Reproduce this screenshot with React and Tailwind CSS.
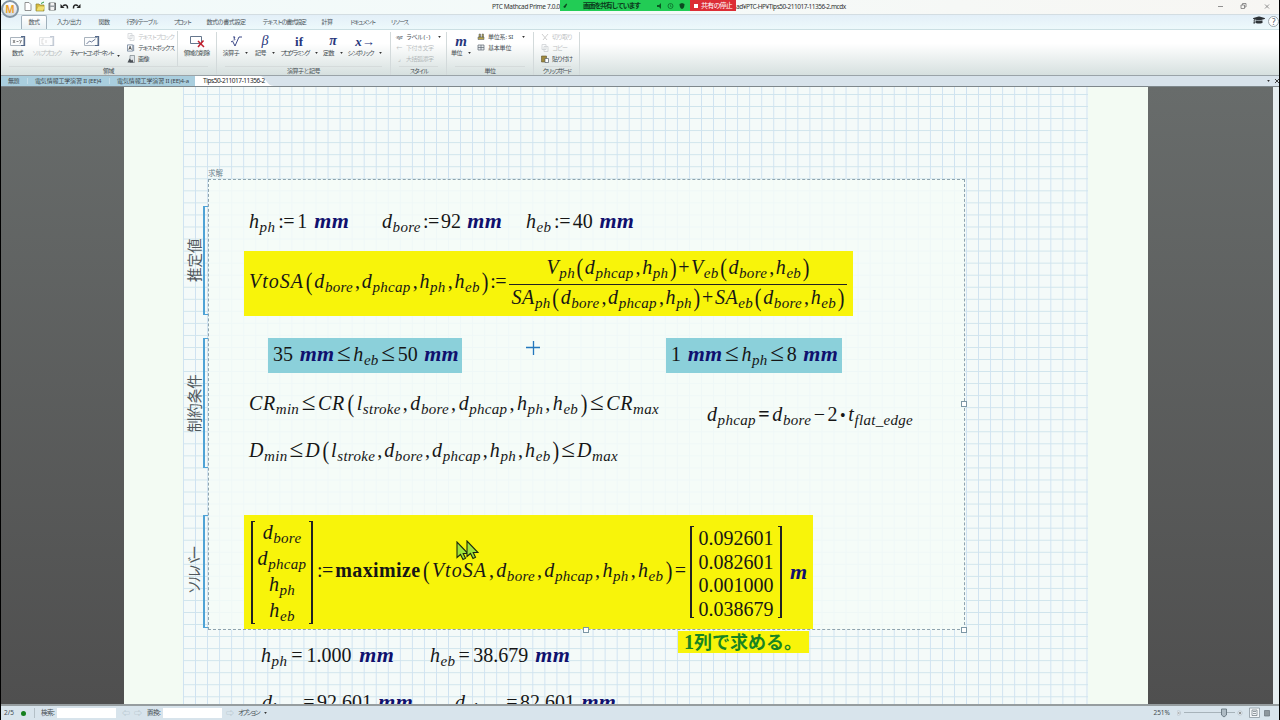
import clsx from "clsx";
import { FaGraduationCap } from "react-icons/fa";

const TABS = [
  { label: "入力/出力", cls: "w-[44px]" },
  { label: "関数", cls: "w-[26px]" },
  { label: "行列/テーブル", cls: "w-[50px] tracking-[-1px]" },
  { label: "プロット", cls: "w-[30px] tracking-[-1.8px]" },
  { label: "数式の書式設定", cls: "w-[58px]" },
  { label: "テキストの書式設定", cls: "w-[58px] tracking-[-1.2px]" },
  { label: "計算", cls: "w-[28px]" },
  { label: "ドキュメント", cls: "w-[42px] tracking-[-1.8px]" },
  { label: "リソース", cls: "w-[32px] tracking-[-1.7px]" },
];

// ---------- ribbon ----------

function Caret({ className }) {
  return (
    <svg viewBox="0 0 4 3" className={clsx("h-[2px] w-[3px] shrink-0", className)}>
      <path d="M0 0h4L2 3z" fill="#333" />
    </svg>
  );
}

function Big({ icon, label, cls, off, caret }) {
  return (
    <div className={clsx("flex shrink-0 flex-col items-center", cls, off && "opacity-35")}>
      <div className="flex h-[14px] items-center justify-center">{icon}</div>
      <div className="mt-px flex h-[8px] items-center gap-[6px] whitespace-nowrap">
        <span>{label}</span>
        {caret && <Caret />}
      </div>
    </div>
  );
}

function Small({ icon, label, off, caret }) {
  return (
    <div className={clsx("flex h-[11px] items-center gap-[3px] whitespace-nowrap", off && "opacity-35")}>
      <span className="flex w-[8px] shrink-0 justify-center">{icon}</span>
      <span>{label}</span>
      {caret && <Caret className="ml-auto" />}
    </div>
  );
}

function Group({ title, cls, children }) {
  return (
    <div className={clsx("flex shrink-0 flex-col border-r border-[#d3dadb]", cls)}>
      <div className="flex h-[34px] pt-[2px]">{children}</div>
      <div className="mx-2 border-t border-[#d5dbdb] text-center leading-[8px]">{title}</div>
    </div>
  );
}

function BoxIcon({ children }) {
  return (
    <svg viewBox="0 0 16 10" className="h-[10px] w-[16px]">
      <path d="M.5 1.5h13v8H.5z" fill="#fbfcfd" stroke="#a9b3bd" />
      <path d="M11 .6h3.6v9H11" fill="none" stroke="#53688a" strokeWidth="1.1" />
      {children}
    </svg>
  );
}

function Glyph({ children, className }) {
  return (
    <span className={clsx("font-['Liberation_Serif',serif] leading-none tracking-normal text-[#27367c]", className)}>
      {children}
    </span>
  );
}

function PageIcon({ color = "#7d8790" }) {
  return (
    <svg viewBox="0 0 8 8" className="h-[8px] w-[8px]">
      <path d="M1 .5h4v5H1zM3 2.5h4v5H3z" fill="#f8fafb" stroke={color} strokeWidth=".8" />
    </svg>
  );
}

function TitleBar() {
  return (
    <div className="flex h-[14px] shrink-0 items-start bg-gradient-to-r from-[#f1fafa] via-[#f5faf9] to-[#f7f6f3]">
      <svg viewBox="0 0 62 14" className="ml-[21px] mt-px h-[14px] w-[62px]">
        <path d="M3 1.500h4l2 2v6H3z" fill="#fff" stroke="#777" strokeWidth=".8" />
        <path d="M14 3h3l1 1h4v6h-8z" fill="#d5b83c" stroke="#8b8434" strokeWidth=".7" />
        <path d="M14.500 9.500l2-4h6.500l-2 4z" fill="#f0df6e" />
        <path d="M19 2.500l3-1.500" stroke="#2f9b3d" />
        <path d="M27 2h6.500v7H27z" fill="#9aa0a4" stroke="#555" strokeWidth=".8" />
        <path d="M28.500 2h3.500v2.500h-3.500zM28.500 6h3.500v3h-3.500z" fill="#f2f2f2" />
        <path d="M41 5c2-2 5-1 4.500 2.500" fill="none" stroke="#222" strokeWidth="1.500" />
        <path d="M38.500 3v4h4z" fill="#222" />
        <path d="M56 5c-2-2-5-1-4.500 2.500" fill="none" stroke="#222" strokeWidth="1.500" />
        <path d="M58.500 3v4h-4z" fill="#222" />
      </svg>
      <div className="ml-[408px] w-[68px] whitespace-nowrap pt-[2px] text-[6.500px] leading-[9px] tracking-[-0.350px] text-[#333]">
        PTC Mathcad Prime 7.0.0
      </div>
      <div className="flex h-[11px] w-[130px] items-center bg-[#22cc55] text-[7px] font-bold leading-none text-[#0b3a1c]">
        <svg viewBox="0 0 6 6" className="ml-[3px] h-[5px] w-[5px]">
          <path d="M1 4l3-3.500 1 1-2 4-2 .5z" fill="#0b4a20" />
        </svg>
        <span className="ml-[15px] w-[58px] whitespace-nowrap tracking-[-1.300px]">画面を共有しています</span>
        <svg viewBox="0 0 30 8" className="ml-[15px] h-[8px] w-[30px]">
          <path d="M1 3h2l2-2v6L3 5H1z" fill="#0b5a24" />
          <circle cx="14.500" cy="4" r="2.500" fill="none" stroke="#0b6a2a" strokeWidth=".8" />
          <path d="M14.500 2.500v2h1" fill="none" stroke="#0b6a2a" strokeWidth=".6" />
          <path d="M23.500 2l2.500-1 2.500 1c0 3-1 4.500-2.500 5-1.500-.5-2.500-2-2.500-5z" fill="#0b4a20" />
        </svg>
      </div>
      <div className="flex h-[11px] w-[46px] items-center gap-[3px] bg-[#dc2d35] pl-[4px] text-[7px] leading-none text-white">
        <span className="h-[4px] w-[4px] bg-white" />
        <span className="whitespace-nowrap tracking-[-0.800px]">共有の停止</span>
      </div>
      <div className="whitespace-nowrap pt-[2px] text-[6.500px] leading-[9px] tracking-[-0.470px] text-[#333]">
        ad¥PTC-HP¥Tips50-211017-11356-2.mcdx
      </div>
      <svg viewBox="0 0 54 8" className="ml-auto mr-[8px] mt-[2px] h-[8px] w-[54px]" fill="none" stroke="#777" strokeWidth=".8">
        <path d="M1 4.500h5M24 3h3.500v3.500H24zM25.500 3V1.500H29V5h-1.500M48 2.500l4 4M52 2.500l-4 4" />
      </svg>
    </div>
  );
}

function RibbonTabs() {
  return (
    <div className="flex h-[16px] shrink-0 items-end border-b border-t border-b-[#cbdfe3] border-t-[#d3dde2] bg-gradient-to-b from-[#e3eff8] to-[#edf9fb] pl-[20px] text-[6px] tracking-[-0.400px] text-[#4c565c]">
      <div className="flex h-[14px] w-[26px] items-center justify-center rounded-t-[2px] border border-b-0 border-[#9fb0bb] bg-gradient-to-b from-white to-[#e8f1f4]">
        数式
      </div>
      {TABS.map((t) => (
        <div key={t.label} className={clsx("flex h-[14px] items-center justify-center whitespace-nowrap", t.cls)}>
          {t.label}
        </div>
      ))}
      <FaGraduationCap className="mb-[3px] ml-auto text-[12px] text-[#2d3236]" />
      <span className="mb-[2px] ml-[3px] flex h-[11px] w-[11px] items-center justify-center rounded-full border border-[#9aa5aa] bg-white text-[8px] leading-none">
        ?
      </span>
    </div>
  );
}

function Ribbon() {
  return (
    <div className="flex h-[46px] shrink-0 border-b border-[#9aa3a8] bg-gradient-to-b from-white from-30% to-[#d6e0df] pt-[2px] text-[6px] leading-[8px] tracking-[-0.500px] text-[#434b50]">
      <Group title="領域" cls="w-[216px]">
        <Big
          cls="w-[33px]"
          label="数式"
          icon={
            <BoxIcon>
              <path d="M3 4l2 3M5 4L3 7M6.500 5.500h2M9.500 4l1 1.500M11.500 4l-1.500 3.500" stroke="#555" strokeWidth=".7" fill="none" />
            </BoxIcon>
          }
        />
        <Big
          cls="w-[25px] tracking-[-1.900px]"
          label="ソルブブロック"
          off
          icon={
            <BoxIcon>
              <path d="M5 3H3v5h2M7 4v3" stroke="#777" strokeWidth=".7" fill="none" />
            </BoxIcon>
          }
        />
        <Big
          cls="w-[58px] pl-[7px] tracking-[-2.100px]"
          label="チャートコンポーネント"
          icon={
            <BoxIcon>
              <path d="M2.500 8l3-3 2 1 4-3" stroke="#4b5d80" strokeWidth=".8" fill="none" />
            </BoxIcon>
          }
        />
        <div className="flex w-[8px] items-end pb-[9px]">
          <Caret />
        </div>
        <div className="-mt-[3px] flex w-[53px] flex-col border-r border-[#d3dadb] pl-[2px] tracking-[-1.500px]">
          <Small icon={<PageIcon />} label="テキストブロック" off />
          <Small
            icon={
              <svg viewBox="0 0 9 8" className="h-[8px] w-[9px]">
                <path d="M.5.5h6v7h-6zM7.500.5v7" fill="none" stroke="#5b6f8c" strokeWidth=".8" />
                <path d="M2 6l1.500-4L5 6M2.500 4.500h2" fill="none" stroke="#333" strokeWidth=".8" />
              </svg>
            }
            label="テキストボックス"
          />
          <Small
            icon={
              <svg viewBox="0 0 8 8" className="h-[8px] w-[8px]">
                <path d="M3 .5h4.500v7H3z" fill="#dfe4e8" stroke="#69737b" strokeWidth=".6" />
                <path d="M.5 7.500l2-4 2 2 1-1 1 3z" fill="#4a4f55" />
              </svg>
            }
            label={<span className="tracking-[-0.500px]">画像</span>}
          />
        </div>
        <Big
          cls="w-[37px] tracking-[-0.900px]"
          label="領域の削除"
          icon={
            <svg viewBox="0 0 16 13" className="h-[13px] w-[16px]">
              <path d="M1.500 1.500h11v7h-11z" fill="#fff" stroke="#65768d" />
              <path d="M9 6l6 6M14.500 5.500L9 12" stroke="#c01f2d" strokeWidth="1.500" />
            </svg>
          }
        />
      </Group>
      <Group title="演算子と記号" cls="w-[174px]">
        <Big
          cls="w-[37px]"
          label="演算子"
          caret
          icon={
            <svg viewBox="0 0 12 11" className="h-[11px] w-[12px]" fill="none" stroke="#27367c" strokeWidth=".9">
              <path d="M1 6l1.500-1L5 10l4-9h3M3 1h2L4 2.500c1.500 0 1 2-.5 1.500" />
            </svg>
          }
        />
        <Big cls="w-[22px]" label="記号" caret icon={<Glyph className="text-[14px] italic">β</Glyph>} />
        <Big cls="w-[46px] tracking-[-1.900px]" label="プログラミング" caret icon={<Glyph className="text-[13px] font-bold">if</Glyph>} />
        <Big cls="w-[22px]" label="定数" caret icon={<Glyph className="text-[14px] font-bold italic">π</Glyph>} />
        <Big cls="w-[42px] tracking-[-1.700px]" label="シンボリック" caret icon={<Glyph className="text-[13px] font-bold italic">x→</Glyph>} />
      </Group>
      <Group title={<span className="tracking-[-1.500px]">スタイル</span>} cls="w-[56px]">
        <div className="-mt-[3px] flex w-[50px] flex-col pl-[4px] tracking-[-0.500px]">
          <Small icon={<span className="text-[5px]">·xyz</span>} label="ラベル ( - )" caret />
          <Small icon="←" label="下付き文字" off />
          <Small icon="⌟" label="大括弧添字" off />
        </div>
      </Group>
      <Group title="単位" cls="w-[87px]">
        <Big cls="w-[28px]" label="単位" caret icon={<Glyph className="text-[15px] font-bold italic">m</Glyph>} />
        <div className="-mt-[3px] flex w-[50px] flex-col pl-[2px] tracking-[-0.200px]">
          <Small
            icon={
              <svg viewBox="0 0 8 7" className="h-[7px] w-[8px]">
                <path d="M1 4h6v2.500H1zM2 1h1.500v3H2zM5 1h1.500v3H5z" fill="#b9a64c" stroke="#4d5560" strokeWidth=".5" />
              </svg>
            }
            label="単位系: SI"
            caret
          />
          <Small
            icon={
              <svg viewBox="0 0 8 7" className="h-[7px] w-[8px]">
                <path d="M1 1h6v5H1zM1 3.500h6M4 1v5" fill="#e6ebee" stroke="#5b6670" strokeWidth=".7" />
              </svg>
            }
            label="基本単位"
          />
        </div>
      </Group>
      <Group title={<span className="tracking-[-2px]">クリップボード</span>} cls="w-[46px] whitespace-nowrap">
        <div className="-mt-[3px] flex flex-col pl-[7px] tracking-[-1px]">
          <Small
            off
            icon={
              <svg viewBox="0 0 8 8" className="h-[8px] w-[8px]" fill="none" stroke="#777">
                <path d="M1 1l5 6M7 1L2 7" />
              </svg>
            }
            label="切り取り"
          />
          <Small off icon={<PageIcon />} label="コピー" />
          <Small
            icon={
              <svg viewBox="0 0 8 8" className="h-[8px] w-[8px]">
                <path d="M.5 1h5v6h-5z" fill="#a08a3d" stroke="#5f5631" strokeWidth=".6" />
                <path d="M4 3.500h3.500v4H4z" fill="#fff" stroke="#555e6a" strokeWidth=".7" />
              </svg>
            }
            label="貼り付け"
          />
        </div>
      </Group>
    </div>
  );
}

function SheetTabs() {
  return (
    <div className="flex h-[11px] shrink-0 items-center border-b border-[#7e878b] bg-[#d8e3eb] text-[6px] leading-none text-[#3d464c]">
      <div className="flex h-full items-center bg-[#a9cede]">
        <span className="w-[26px] pl-[7px] tracking-[-0.400px]">無題</span>
        <span className="w-[82px] whitespace-nowrap border-l border-[#c4dce7] pl-[7px] tracking-[-0.150px]">電気情報工学演習 II (EE)4</span>
        <span className="w-[86px] whitespace-nowrap border-l border-[#c4dce7] pl-[7px] tracking-[-0.120px]">電気情報工学演習 II (EE)4-a</span>
      </div>
      <svg viewBox="0 0 82 10" className="-mr-[82px] h-full w-[82px]" preserveAspectRatio="none">
        <path d="M0 0h65c6 0 6 10 14 10H0z" fill="#fff" />
      </svg>
      <div className="flex h-full w-[82px] items-center whitespace-nowrap pl-[8px] text-[6.500px] tracking-[-0.430px] text-[#222]">
        <span className="relative">Tips50-211017-11356-2</span>
      </div>
      <Caret className="ml-auto mr-[5px]" />
      <svg viewBox="0 0 4 4" className="h-[4px] w-[4px]" stroke="#444">
        <path d="M0 0l4 4M4 0L0 4" />
      </svg>
    </div>
  );
}

// ---------- math ----------

function V({ n, s, className }) {
  return (
    <span className={clsx("italic tracking-[0.600px]", className)}>
      {n}
      {s && <span className="align-[-4px] text-[15px] leading-none tracking-[0.300px]">{s}</span>}
    </span>
  );
}

function P({ children }) {
  return <span className="inline-block scale-y-[1.250] text-[20px] leading-none">{children}</span>;
}

function Mm({ u = "mm" }) {
  return <span className="pl-[4px] text-[22px] font-bold italic leading-none tracking-[0.200px] text-[#10106e]">{u}</span>;
}

// comma separated list of variables in tall parentheses
function Args({ list }) {
  return (
    <>
      <P>(</P>
      {list.map(([n, s], i) => (
        <span key={i}>
          <V n={n} s={s} />
          {i < list.length - 1 && <span className="pl-[2px]">,</span>}
        </span>
      ))}
      <P>)</P>
    </>
  );
}

function Row({ children, className }) {
  return (
    <div
      className={clsx(
        "flex items-baseline justify-between whitespace-nowrap font-['Liberation_Serif',serif] text-[20px] leading-[24px] text-[#161616]",
        className
      )}
    >
      {children}
    </div>
  );
}

function Def() {
  return <span className="tracking-[-0.500px]">:=</span>;
}

function Le() {
  return <span className="text-[25px] leading-none">≤</span>;
}

function Matrix({ children, className }) {
  return (
    <div className={clsx("flex", className)}>
      <div className="w-[4px] border-y border-l-2 border-[#222]" />
      <div className="flex flex-1 flex-col items-center">{children}</div>
      <div className="w-[4px] border-y border-r-2 border-[#222]" />
    </div>
  );
}

const bore = ["d", "bore"];
const cap = ["d", "phcap"];
const hph = ["h", "ph"];
const heb = ["h", "eb"];
const stroke = ["l", "stroke"];

function Section({ title, className }) {
  return (
    <div className={clsx("absolute left-[185px] flex w-[24px] items-center", className)}>
      <div className="flex w-[18px] shrink-0 items-center justify-center">
        <span className="-rotate-90 whitespace-nowrap text-[14.500px] leading-none text-[#50585c]">{title}</span>
      </div>
      <div className="h-full w-[5px] border-y border-l-2 border-[#4fa3d6]" />
    </div>
  );
}

function Handle({ className }) {
  return <div className={clsx("absolute h-[6px] w-[6px] border border-[#7d97a5] bg-white", className)} />;
}

function Pointer({ className }) {
  return (
    <svg viewBox="0 0 13 20" className={clsx("absolute h-[20px] w-[13px]", className)}>
      <path d="M1 1v15.500l3.500-3 2.500 5 2.500-1.200-2.300-4.800H12z" fill="#a0e43a" stroke="#1c2a10" strokeWidth="1.100" />
    </svg>
  );
}

function Worksheet() {
  return (
    <div className="relative flex flex-1 overflow-hidden bg-gradient-to-b from-[#686c6b] to-[#4f4f4f]">
      <div className="ml-[123px] flex w-[1024px] bg-[#f3fbf3] pl-[59px]">
        <div className="w-[905px] bg-[#f4faf9] bg-[linear-gradient(to_right,#cfe2f1_1px,transparent_1px),linear-gradient(to_bottom,#cfe4ec_1px,transparent_1px)] bg-[length:12.050px_12.050px] bg-[position:0_7px]" />
      </div>
      <div className="ml-auto w-[6px] bg-[#e6eef0]" />

      {/* the canvas the regions are placed on */}
      <div className="absolute inset-y-0 -left-px w-[1280px]">
        <div className="absolute left-[208px] top-[92px] h-[451px] w-[757px] border border-dashed border-[#8ea3ae] bg-[#f4fbf8]/85" />
        <span className="absolute left-[208px] top-[83px] text-[7.500px] leading-none text-[#6c8490]">求解</span>
        <Section title="推定値" className="top-[119px] h-[109px]" />
        <Section title="制約条件" className="top-[251px] h-[130px]" />
        <Section title={<span className="tracking-[-3px]">ソルバー</span>} className="top-[428px] h-[113px]" />

        <Row className="absolute left-[249px] top-[122px] w-[100px]">
          <V n="h" s="ph" />
          <Def />
          <span>1</span>
          <Mm />
        </Row>
        <Row className="absolute left-[382px] top-[122px] w-[120px]">
          <V n="d" s="bore" />
          <Def />
          <span>92</span>
          <Mm />
        </Row>
        <Row className="absolute left-[526px] top-[122px] w-[108px]">
          <V n="h" s="eb" />
          <Def />
          <span>40</span>
          <Mm />
        </Row>

        <div className="absolute left-[244px] top-[164px] flex h-[65px] w-[609px] items-center gap-[3px] bg-[#f8f40a] pb-[4px] pl-[5px]">
          <Row className="w-[257px]">
            <V n="VtoSA" className="tracking-[1px]" />
            <Args list={[bore, cap, hph, heb]} />
            <Def />
          </Row>
          <div className="flex w-[338px] flex-col items-center">
            <Row className="h-[24px] w-[263px]">
              <V n="V" s="ph" />
              <Args list={[cap, hph]} />
              <span>+</span>
              <V n="V" s="eb" />
              <Args list={[bore, heb]} />
            </Row>
            <div className="mt-[5px] h-px w-full bg-[#222]" />
            <Row className="h-[24px] w-[333px]">
              <V n="SA" s="ph" />
              <Args list={[bore, cap, hph]} />
              <span>+</span>
              <V n="SA" s="eb" />
              <Args list={[bore, heb]} />
            </Row>
          </div>
        </div>

        <div className="absolute left-[268px] top-[251px] h-[35px] w-[194px] bg-[#8bd0da] pl-[5px] pt-[2px]">
          <Row className="w-[186px]">
            <span>35</span>
            <Mm />
            <Le />
            <V n="h" s="eb" />
            <Le />
            <span>50</span>
            <Mm />
          </Row>
        </div>
        <div className="absolute left-[666px] top-[251px] h-[35px] w-[176px] bg-[#8bd0da] pl-[5px] pt-[2px]">
          <Row className="w-[167px]">
            <span>1</span>
            <Mm />
            <Le />
            <V n="h" s="ph" />
            <Le />
            <span>8</span>
            <Mm />
          </Row>
        </div>
        <svg viewBox="0 0 14 14" className="absolute left-[526px] top-[254px] h-[14px] w-[14px]">
          <path d="M7.500 0v14M0 6.500h14" stroke="#2377bd" strokeWidth="1.300" />
        </svg>

        <Row className="absolute left-[249px] top-[302px] w-[410px]">
          <V n="CR" s="min" />
          <Le />
          <V n="CR" />
          <Args list={[stroke, bore, cap, hph, heb]} />
          <Le />
          <V n="CR" s="max" />
        </Row>
        <Row className="absolute left-[249px] top-[349px] w-[369px]">
          <V n="D" s="min" />
          <Le />
          <V n="D" />
          <Args list={[stroke, bore, cap, hph, heb]} />
          <Le />
          <V n="D" s="max" />
        </Row>
        <Row className="absolute left-[707px] top-[315px] w-[206px]">
          <V n="d" s="phcap" />
          <b>=</b>
          <V n="d" s="bore" />
          <span>−</span>
          <span>2</span>
          <span className="text-[16px]">•</span>
          <V n="t" s="flat_edge" />
        </Row>

        <div className="absolute left-[244px] top-[428px] flex h-[114px] w-[569px] items-center bg-[#f8f40a] pl-[7px]">
          <Matrix className="h-[103px] w-[62px]">
            <Row className="-mt-[1px] h-[26px]">
              <V n="d" s="bore" />
            </Row>
            <Row className="h-[26px]">
              <V n="d" s="phcap" />
            </Row>
            <Row className="h-[26px]">
              <V n="h" s="ph" />
            </Row>
            <Row className="h-[26px]">
              <V n="h" s="eb" />
            </Row>
          </Matrix>
          <Row className="ml-[4px] w-[369px] pb-[2px]">
            <Def />
            <b className="tracking-[0.400px]">maximize</b>
            <P>(</P>
            <span>
              <V n="VtoSA" className="tracking-[1px]" />
              <span className="pl-[2px]">,</span>
            </span>
            {[bore, cap, hph].map(([n, s]) => (
              <span key={n + s}>
                <V n={n} s={s} />
                <span className="pl-[2px]">,</span>
              </span>
            ))}
            <V n="h" s="eb" />
            <P>)</P>
            <span>=</span>
          </Row>
          <Matrix className="ml-[4px] h-[92px] w-[92px]">
            {["0.092601", "0.082601", "0.001000", "0.038679"].map((v) => (
              <Row key={v} className="h-[23.500px]">
                {v}
              </Row>
            ))}
          </Matrix>
          <Row className="ml-[4px] w-[22px]">
            <Mm u="m" />
          </Row>
        </div>
        <Pointer className="left-[456px] top-[454px]" />
        <Pointer className="left-[466px] top-[453px]" />

        <div className="absolute left-[678px] top-[544px] flex h-[22px] w-[131px] items-center bg-[#f8f40a] pl-[6px] text-[18px] font-bold leading-none text-[#188522]">
          <span className="font-['Liberation_Serif',serif] text-[20px]">1</span>
          <span className="whitespace-nowrap">列で求める。</span>
        </div>
        <Handle className="left-[961px] top-[314px]" />
        <Handle className="left-[961px] top-[540px]" />
        <Handle className="left-[583px] top-[540px]" />

        <Row className="absolute left-[261px] top-[556px] w-[133px]">
          <V n="h" s="ph" />
          <span>=</span>
          <span>1.000</span>
          <Mm />
        </Row>
        <Row className="absolute left-[430px] top-[556px] w-[140px]">
          <V n="h" s="eb" />
          <span>=</span>
          <span>38.679</span>
          <Mm />
        </Row>
        <Row className="absolute left-[262px] top-[603px] w-[151px]">
          <V n="d" s="bore" />
          <span>=</span>
          <span>92.601</span>
          <Mm />
        </Row>
        <Row className="absolute left-[455px] top-[603px] w-[161px]">
          <V n="d" s="phcap" />
          <span>=</span>
          <span>82.601</span>
          <Mm />
        </Row>
      </div>
    </div>
  );
}

function StatusBar() {
  return (
    <div className="flex h-[16px] shrink-0 items-center border-t-2 border-[#969d9f] bg-[#d8e4ec] text-[6.500px] leading-none text-[#444c52]">
      <span className="w-[17px] pl-[3px]">2/5</span>
      <span className="ml-[3px] h-[5px] w-[5px] rounded-full bg-[#16811f]" />
      <span className="ml-[8px] h-[10px] w-px bg-[#b4c0c7]" />
      <span className="ml-[6px] w-[16px] whitespace-nowrap tracking-[-0.500px]">検索:</span>
      <span className="h-[10px] w-[59px] bg-white" />
      <span className="ml-[6px] w-[25px] whitespace-nowrap text-[8px] tracking-[4px] text-[#a9b8c2]">⇦⇨</span>
      <span className="w-[16px] whitespace-nowrap tracking-[-0.500px]">置換:</span>
      <span className="h-[10px] w-[59px] bg-white" />
      <span className="ml-[4px] w-[12px] text-[8px] text-[#a9b8c2]">⇨</span>
      <span className="w-[26px] whitespace-nowrap tracking-[-2.400px]">オプション</span>
      <Caret />
      <span className="ml-auto mr-[7px]">251%</span>
      <svg viewBox="0 0 102 14" className="h-[14px] w-[102px]">
        <circle cx="1.500" cy="7" r="2.200" fill="#e8eef2" stroke="#a9b6bf" strokeWidth=".6" />
        <path d="M.5 7h2" stroke="#555" strokeWidth=".7" />
        <path d="M7 6.500h51" stroke="#9aa6ad" strokeWidth=".8" />
        <path d="M44.500 3h5v6l-2.500 2-2.500-2z" fill="#aebbc4" stroke="#5a6973" strokeWidth=".8" />
        <circle cx="63" cy="7" r="2.200" fill="#e8eef2" stroke="#a9b6bf" strokeWidth=".6" />
        <path d="M62 7h2M63 6v2" stroke="#555" strokeWidth=".7" />
        <path d="M72.500 2h10v9.500h-10z" fill="#f4f7f9" stroke="#8b979f" strokeWidth=".8" />
        <path d="M75 4h5v5.500h-5zM76 5.500h3M76 7.500h3" fill="none" stroke="#68737b" strokeWidth=".7" />
        <path d="M87.500 4.500h5v5.500h-5z" fill="#8d979d" stroke="#68737b" strokeWidth=".7" />
      </svg>
    </div>
  );
}

export default function App() {
  return (
    <div className="relative flex h-[720px] w-[1280px] flex-col overflow-hidden border-x border-black font-['Noto_Sans','Noto_Sans_CJK_JP',sans-serif]">
      <TitleBar />
      <RibbonTabs />
      <Ribbon />
      <SheetTabs />
      <Worksheet />
      <StatusBar />
      {/* application button overlaps the title bar and the tabs */}
      <div className="absolute left-0 top-0 flex h-[18px] w-[18px] items-center justify-center rounded-full border-2 border-[#8294a3] bg-gradient-to-b from-white to-[#cfd9df] text-[10px] font-bold leading-none text-[#eaa12b]">
        M
      </div>
    </div>
  );
}
